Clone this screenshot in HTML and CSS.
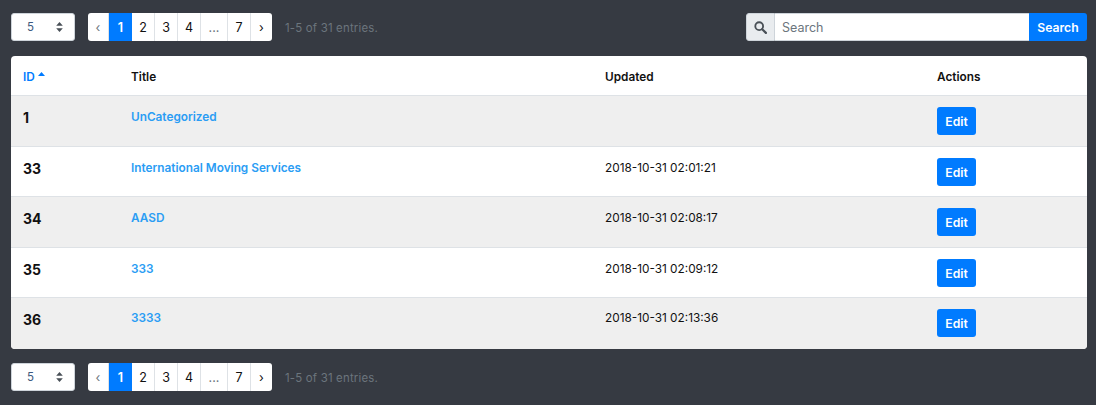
FILE: index.html
```html
<!DOCTYPE html>
<html lang="en">
<head>
    <meta charset="UTF-8">
    <title>Categories</title>
    <link rel="stylesheet" href="styles.css">
</head>
<body>
    <div class="toolbar">
        <div class="page-size"><span>5</span>
            <svg class="updown" width="7" height="10" viewBox="0 0 7 10"><path d="M3.5 0 6.8 3.8H0.2ZM3.5 10 0.2 6.2H6.8Z"/></svg>
        </div>
        <ul class="pager">
            <li class="muted">‹</li>
            <li class="active">1</li>
            <li>2</li>
            <li>3</li>
            <li>4</li>
            <li class="dots">...</li>
            <li>7</li>
            <li class="next">›</li>
        </ul>
        <span class="entries">1-5 of 31 entries.</span>
        <form class="search">
            <span class="search-icon">
                <svg width="13" height="13" viewBox="0 0 14 14"><circle cx="5.6" cy="5.6" r="4.2" fill="none" stroke="#495057" stroke-width="2"/><path d="M8.8 8.8 12.8 12.8" stroke="#495057" stroke-width="2.4" stroke-linecap="round"/></svg>
            </span>
            <input class="search-input" type="text" placeholder="Search">
            <button class="search-btn" type="button">Search</button>
        </form>
    </div>

    <div class="card">
        <table>
            <thead>
                <tr>
                    <th class="col-id sorted">ID <svg class="caret" width="7" height="4" viewBox="0 0 7 4"><path d="M3.5 0 7 4H0Z"/></svg></th>
                    <th class="col-title">Title</th>
                    <th class="col-updated">Updated</th>
                    <th>Actions</th>
                </tr>
            </thead>
            <tbody>
                <tr>
                    <td class="id">1</td>
                    <td><a href="#">UnCategorized</a></td>
                    <td></td>
                    <td class="action"><button class="edit" type="button">Edit</button></td>
                </tr>
                <tr>
                    <td class="id">33</td>
                    <td><a href="#">International Moving Services</a></td>
                    <td>2018-10-31 02:01:21</td>
                    <td class="action"><button class="edit" type="button">Edit</button></td>
                </tr>
                <tr>
                    <td class="id">34</td>
                    <td><a href="#">AASD</a></td>
                    <td>2018-10-31 02:08:17</td>
                    <td class="action"><button class="edit" type="button">Edit</button></td>
                </tr>
                <tr>
                    <td class="id">35</td>
                    <td><a href="#">333</a></td>
                    <td>2018-10-31 02:09:12</td>
                    <td class="action"><button class="edit" type="button">Edit</button></td>
                </tr>
                <tr>
                    <td class="id">36</td>
                    <td><a href="#">3333</a></td>
                    <td>2018-10-31 02:13:36</td>
                    <td class="action"><button class="edit" type="button">Edit</button></td>
                </tr>
            </tbody>
        </table>
    </div>

    <div class="toolbar bottom">
        <div class="page-size"><span>5</span>
            <svg class="updown" width="7" height="10" viewBox="0 0 7 10"><path d="M3.5 0 6.8 3.8H0.2ZM3.5 10 0.2 6.2H6.8Z"/></svg>
        </div>
        <ul class="pager">
            <li class="muted">‹</li>
            <li class="active">1</li>
            <li>2</li>
            <li>3</li>
            <li>4</li>
            <li class="dots">...</li>
            <li>7</li>
            <li class="next">›</li>
        </ul>
        <span class="entries">1-5 of 31 entries.</span>
    </div>
</body>
</html>
```

FILE: styles.css
```css
* { box-sizing: border-box; }
html, body { height: 405px; overflow: hidden; }
body {
    margin: 0;
    padding: 13px 9px 0 11px;
    background-color: #363a42;
    font-family: "Inter", "Liberation Sans", sans-serif;
    font-size: 12px;
    color: #111;
}
.toolbar { display: flex; align-items: center; height: 28px; }
.toolbar.bottom { margin-top: 14px; }
.page-size {
    width: 64px;
    height: 28px;
    display: flex;
    align-items: center;
    justify-content: space-between;
    padding: 0 11px 0 15px;
    background: #fff;
    border: 1px solid #ced4da;
    border-radius: 3px;
    color: #3d5a80;
    font-size: 11.5px;
}
.updown { fill: #495057; }
.pager {
    display: flex;
    height: 28px;
    margin: 0 0 0 13px;
    padding: 0;
    list-style: none;
    background: #fff;
    border-radius: 3px;
    overflow: hidden;
}
.pager li {
    flex: none;
    width: 23px;
    display: flex;
    align-items: center;
    justify-content: center;
    border-right: 1px solid #dee2e6;
    font-size: 12.5px;
    color: #111;
}
.pager .muted { width: 21px; color: #6c757d; }
.pager .active { background: #007bff; color: #fff; font-weight: 600; border-right: 0; }
.pager .dots { width: 27px; color: #6c757d; }
.pager .next { width: 21px; border-right: 0; }
.entries { margin-left: 13px; padding-top: 1px; color: #6c757d; font-size: 11.4px; letter-spacing: 0.2px; }
.search {
    display: flex;
    width: 341px;
    height: 28px;
    margin: 0 0 0 auto;
}
.search-icon {
    width: 29px;
    display: flex;
    align-items: center;
    justify-content: center;
    background: #e9ecef;
    border: 1px solid #ced4da;
    border-radius: 3px 0 0 3px;
}
.search-input {
    flex: 1;
    min-width: 0;
    padding: 0 7px;
    border: 1px solid #ced4da;
    border-width: 1px 0;
    outline: 0;
    font: 12.5px "Inter", "Liberation Sans", sans-serif;
}
.search-input::placeholder { color: #6c757d; opacity: 1; }
.search-btn {
    width: 58px;
    padding: 0;
    border: 0;
    border-radius: 0 3px 3px 0;
    background: #007bff;
    color: #fff;
    font: 600 12.2px "Inter", "Liberation Sans", sans-serif;
}
.card {
    margin-top: 15px;
    background: #fff;
    border-radius: 4px;
    overflow: hidden;
}
table { width: 100%; border-collapse: collapse; table-layout: fixed; }
th {
    height: 39px;
    padding: 3px 12px 0;
    text-align: left;
    font-size: 11.8px;
    font-weight: 600;
    border-bottom: 1px solid #dee2e6;
}
.col-id { width: 108px; }
.col-title { width: 474px; }
.col-updated { width: 332px; }
.sorted { color: #007bff; }
.caret { fill: #007bff; vertical-align: 5px; }
td {
    height: 50px;
    padding: 14px 12px 0;
    vertical-align: top;
    font-size: 11.8px;
    border-top: 1px solid #dee2e6;
}
tbody tr:nth-child(1) td { height: 51px; border-top: 0; }
tbody tr:nth-child(3) td { height: 51px; }
tbody tr:nth-child(5) td { height: 52px; padding-top: 13px; }
tbody tr:nth-child(odd) { background: #efefef; }
td.id, tbody tr:nth-child(5) td.id { padding-top: 13px; font-size: 14px; font-weight: 700; }
td a { color: #2a9df4; font-weight: 600; text-decoration: none; }
td.action, tbody tr:nth-child(5) td.action { padding-top: 11px; }
.edit {
    display: block;
    width: 39px;
    height: 28px;
    padding: 1px 0 0;
    border: 0;
    border-radius: 3px;
    background: #007bff;
    color: #fff;
    font: 600 12.2px "Inter", "Liberation Sans", sans-serif;
}
```
